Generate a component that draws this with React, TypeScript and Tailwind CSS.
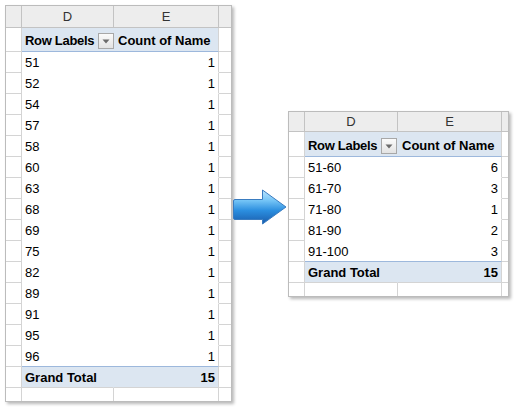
import React from 'react';

type Cols = { rh: string; d: string; e: string; x: string };

interface PivotProps {
    cols: Cols;
    headH: string;
    labH: string;
    labPt: string;
    rows: [string, number][];
    total: number;
    btnMr: string;
}

const rowH = 'h-[21px]';

function DropButton({ mr }: { mr: string }) {
    return (
        <div className={`ml-auto ${mr} flex h-[16px] w-[16px] shrink-0 items-center justify-center border border-[#a8a8a8] bg-gradient-to-b from-[#fbfbfb] to-[#e3e3e3]`}>
            <svg width="8" height="5" viewBox="0 0 8 5">
                <path d="M0.5 0.5 L7.5 0.5 L4 4.5 Z" fill="#6b6b6b" />
            </svg>
        </div>
    );
}

function PivotSheet({ cols, headH, labH, labPt, rows, total, btnMr }: PivotProps) {
    return (
        <div className="border border-[#bcbcbc] bg-white shadow-[2px_2px_3px_rgba(0,0,0,0.28)]">
            {/* column letters */}
            <div className={`flex ${headH} bg-[#ededed] text-[13px] text-[#333]`}>
                <div className={`${cols.rh} border-b border-r border-[#c3c3c3]`} />
                <div className={`${cols.d} flex items-center justify-center border-b border-r border-[#c3c3c3]`}>D</div>
                <div className={`${cols.e} flex items-center justify-center border-b border-r border-[#c3c3c3]`}>E</div>
                <div className={`${cols.x} border-b border-[#c3c3c3]`} />
            </div>

            {/* pivot header */}
            <div className={`flex ${labH} whitespace-nowrap text-[13px] font-bold text-black`}>
                <div className={`${cols.rh} border-b border-r border-[#d4d4d4]`} />
                <div className={`${cols.d} flex items-center border-b border-[#9db8dc] bg-[#dce6f1] pl-[3px] ${labPt}`}>
                    <span className="tracking-[-0.3px]">Row Labels</span>
                    <DropButton mr={btnMr} />
                </div>
                <div className={`${cols.e} flex items-center border-b border-r border-[#9db8dc] border-r-[#d4d4d4] bg-[#dce6f1] pl-[4px] ${labPt}`}>
                    Count of Name
                </div>
                <div className={`${cols.x} border-b border-[#d4d4d4]`} />
            </div>

            {rows.map(([label, n], i) => {
                const last = i === rows.length - 1;
                return (
                    <div key={label} className={`flex ${rowH} text-[13px] text-black`}>
                        <div className={`${cols.rh} border-b border-r border-[#d4d4d4]`} />
                        <div className={`${cols.d} flex items-center border-b pl-[3px] pt-[2px] ${last ? 'border-[#9db8dc]' : 'border-white'}`}>
                            {label}
                        </div>
                        <div className={`${cols.e} flex items-center justify-end border-b border-r border-r-[#d4d4d4] pr-[3px] pt-[2px] ${last ? 'border-b-[#9db8dc]' : 'border-b-white'}`}>
                            {n}
                        </div>
                        <div className={`${cols.x} border-b border-[#d4d4d4]`} />
                    </div>
                );
            })}

            {/* grand total */}
            <div className={`flex ${rowH} text-[13px] font-bold text-black`}>
                <div className={`${cols.rh} border-b border-r border-[#d4d4d4]`} />
                <div className={`${cols.d} flex items-center border-b border-r border-[#d4d4d4] border-r-[#dce6f1] bg-[#dce6f1] pl-[3px] pt-[2px]`}>
                    Grand Total
                </div>
                <div className={`${cols.e} flex items-center justify-end border-b border-r border-[#d4d4d4] bg-[#dce6f1] pr-[3px] pt-[2px]`}>
                    {total}
                </div>
                <div className={`${cols.x} border-b border-[#d4d4d4]`} />
            </div>

            {/* blank row */}
            <div className="flex h-[13px]">
                <div className={`${cols.rh} border-r border-[#d4d4d4]`} />
                <div className={`${cols.d} border-r border-[#d4d4d4]`} />
                <div className={`${cols.e} border-r border-[#d4d4d4]`} />
                <div className={cols.x} />
            </div>
        </div>
    );
}

function BlueArrow() {
    return (
        <svg width="55" height="36" viewBox="0 0 55 36">
            <defs>
                <linearGradient id="arrowFill" x1="0" y1="0" x2="0" y2="36" gradientUnits="userSpaceOnUse">
                    <stop offset="0" stopColor="#c4e8ff" />
                    <stop offset="0.32" stopColor="#74c4f6" />
                    <stop offset="0.6" stopColor="#2b8edf" />
                    <stop offset="1" stopColor="#1858a8" />
                </linearGradient>
            </defs>
            <path
                d="M2 10.5 L29.5 10.5 L29.5 1 L53 18 L29.5 35 L29.5 30.5 L2 30.5 Q0.5 30.5 0.5 29 L0.5 12 Q0.5 10.5 2 10.5 Z"
                fill="url(#arrowFill)"
                stroke="#3a7cc0"
                strokeWidth="1"
                strokeLinejoin="round"
            />
        </svg>
    );
}

const leftRows: [string, number][] = [
    ['51', 1], ['52', 1], ['54', 1], ['57', 1], ['58', 1], ['60', 1], ['63', 1], ['68', 1],
    ['69', 1], ['75', 1], ['82', 1], ['89', 1], ['91', 1], ['95', 1], ['96', 1],
];

const rightRows: [string, number][] = [
    ['51-60', 6], ['61-70', 3], ['71-80', 1], ['81-90', 2], ['91-100', 3],
];

export default function App() {
    return (
        <div className="flex h-[408px] w-[515px] items-start overflow-hidden bg-white font-['Liberation_Sans',Arial,sans-serif]">
            <div className="ml-[5px] mt-[5px]">
                <PivotSheet
                    cols={{ rh: 'w-[16px]', d: 'w-[92px]', e: 'w-[105px]', x: 'w-[12px]' }}
                    headH="h-[22px]"
                    labH="h-[24px]"
                    labPt="pt-[3px]"
                    rows={leftRows}
                    total={15}
                    btnMr="mr-0"
                />
            </div>
            <div className="ml-px mt-[189px] w-[55px]">
                <BlueArrow />
            </div>
            <div className="mt-[111px]">
                <PivotSheet
                    cols={{ rh: 'w-[16px]', d: 'w-[93px]', e: 'w-[104px]', x: 'w-[6px]' }}
                    headH="h-[20px]"
                    labH="h-[25px]"
                    labPt="pt-[4px]"
                    rows={rightRows}
                    total={15}
                    btnMr="mr-px"
                />
            </div>
        </div>
    );
}
